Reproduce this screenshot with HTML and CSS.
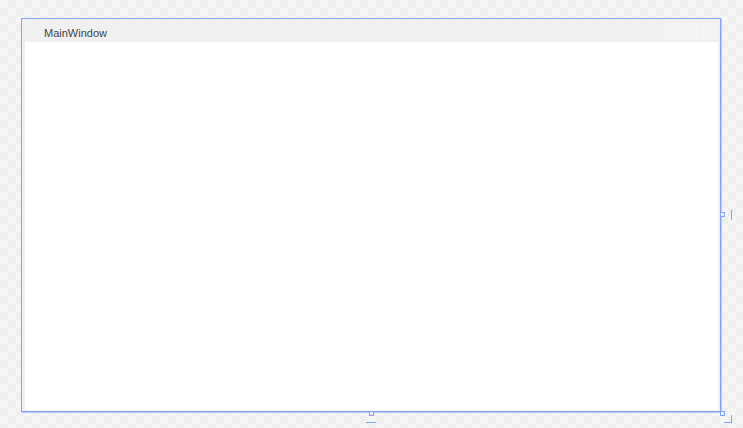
FILE: index.html
```html
<!DOCTYPE html>
<html>
<head>
<meta charset="utf-8">
<link rel="stylesheet" href="styles.css">
</head>
<body>
<div class="canvas">
  <div class="selection">
    <div class="window">
      <div class="titlebar">
        <span class="title">MainWindow</span>
        <div class="buttons">
          <span class="btn"></span>
          <span class="btn"></span>
          <span class="btn"></span>
        </div>
      </div>
      <div class="client"></div>
    </div>
    <span class="handle h-right"></span>
    <span class="handle h-bottom"></span>
    <span class="handle h-corner"></span>
    <span class="grip g-right"></span>
    <span class="grip g-bottom"></span>
    <span class="grip g-corner"></span>
  </div>
</div>
</body>
</html>
```

FILE: styles.css
```css
html, body {
  margin: 0;
  padding: 0;
}
body {
  width: 743px;
  height: 428px;
  overflow: hidden;
  background-color: #f5f5f5;
  background-image: conic-gradient(#efefef 25%, #f6f6f6 0 50%, #efefef 0 75%, #f6f6f6 0);
  background-size: 16px 16px;
  font-family: "Liberation Sans", "Open Sans", sans-serif;
}
.canvas {
  padding: 18px 0 0 21px;
}
.selection {
  position: relative;
  width: 698px;
  height: 392px;
  border: 1px solid #86a4f2;
  box-shadow: 1px 1px 0 #b5c7f5;
}
.window {
  height: 100%;
  display: flex;
  flex-direction: column;
  background: #f0f0f0;
  padding: 0 2px 1px 3px;
  box-sizing: border-box;
}
.titlebar {
  height: 23px;
  display: flex;
  align-items: center;
  justify-content: space-between;
  flex: none;
}
.title {
  padding-left: 19px;
  font-size: 11px;
  color: #444444;
  padding-top: 5px;
}
.buttons {
  display: flex;
  gap: 1px;
  margin-right: 1px;
  padding-top: 1px;
}
.btn {
  width: 17px;
  height: 17px;
  background: #f4f4f4;
}
.client {
  flex: 1;
  background: #ffffff;
}
.handle {
  position: absolute;
  width: 3px;
  height: 3px;
  border: 1px solid #86a4f2;
  background: #e8eefc;
}
.h-right {
  right: -5px;
  top: 193px;
}
.h-bottom {
  left: 347px;
  bottom: -5px;
}
.h-corner {
  right: -5px;
  bottom: -5px;
}
.grip {
  position: absolute;
  background: #86a4f2;
}
.g-right {
  width: 1px;
  height: 10px;
  right: -12px;
  top: 191px;
}
.g-bottom {
  width: 10px;
  height: 1px;
  left: 344px;
  bottom: -12px;
}
.g-corner {
  right: -12px;
  bottom: -12px;
  background: none;
  border-right: 1px solid #86a4f2;
  border-bottom: 1px solid #86a4f2;
  box-sizing: border-box;
  width: 8px;
  height: 8px;
}
```
